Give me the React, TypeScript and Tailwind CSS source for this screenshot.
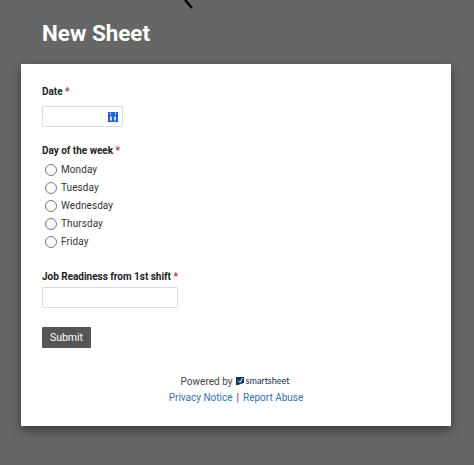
const font = "font-['Roboto',sans-serif]";

function Label({ text }: { text: string }) {
  return (
    <div className="text-[10px] leading-[14px] font-bold text-[#222] tracking-[-0.02px]">
      {text} <span className="text-[#b5273f]">*</span>
    </div>
  );
}

function Radio({ text }: { text: string }) {
  return (
    <div className="flex items-center h-[18px] pl-[3px] gap-[3px]">
      <span className="w-[10px] h-[10px] box-content rounded-full border border-[#777] bg-white shrink-0" />
      <span className="text-[10px] leading-[14px] text-[#333] ml-[1px] tracking-[0.08px]">{text}</span>
    </div>
  );
}

export default function App() {
  return (
    <div className={`${font} relative w-[474px] h-[465px] overflow-hidden bg-[#666666] px-[21px]`}>
      <svg className="absolute left-[183px] top-0" width="12" height="10" viewBox="0 0 12 10">
        <path d="M2 0 L9 8" stroke="#000" strokeWidth="2.5" fill="none" />
      </svg>
      <h1 className="h-[64px] pl-[21px] pt-[18px] text-[22.4px] leading-[30px] font-bold text-white">New Sheet</h1>
      <main className="w-[430px] h-[362px] bg-white shadow-[0_4px_10px_rgba(0,0,0,0.45)] px-[21px] pt-[21px]">
        <Label text="Date" />
        <div className="mt-[7px] w-[81px] h-[21px] border border-[#dcdcdc] rounded-[1px] flex items-center justify-end pr-[4px]">
          <svg width="10" height="10" viewBox="0 0 10 10">
            <rect width="10" height="10" fill="#1f62d8" />
            <rect x="2" y="0.5" width="1" height="2" fill="#cfe0ff" />
            <rect x="7" y="0.5" width="1" height="2" fill="#cfe0ff" />
            <rect x="2" y="4.5" width="2" height="4" fill="#cfe0ff" />
            <rect x="6" y="4.5" width="2" height="4" fill="#cfe0ff" />
          </svg>
        </div>
        <div className="mt-[17px]">
          <Label text="Day of the week" />
        </div>
        <div className="mt-[3px]">
          {["Monday", "Tuesday", "Wednesday", "Thursday", "Friday"].map((d) => (
            <Radio key={d} text={d} />
          ))}
        </div>
        <div className="mt-[19px]">
          <Label text="Job Readiness from 1st shift" />
        </div>
        <div className="mt-[3px] w-[136px] h-[21px] border border-[#dcdcdc] rounded-[1px]" />
        <button className="block mt-[19px] w-[49px] h-[21px] bg-[#555555] rounded-[1px] text-white text-[10.5px] leading-[21px] text-center">
          Submit
        </button>
        <div className="mt-[26px] flex items-center justify-center h-[14px] text-[10px] text-[#444] pr-[2px]">
          <span className="tracking-[0.03px]">Powered by</span>
          <svg className="ml-[3px] mr-[2px]" width="8" height="8" viewBox="0 0 8 8">
            <path d="M0 0 H8 V6 L2 8 H0 Z" fill="#0b3a5c" />
            <path d="M2 3.5 L4 5.5 L6.5 1" stroke="#fff" strokeWidth="1" fill="none" />
          </svg>
          <span className="font-['Lato',sans-serif] font-normal text-[9px] text-[#10304a]">smartsheet</span>
        </div>
        <div className="mt-[3px] flex items-center justify-center text-[10px] leading-[14px] text-[#2f6fc4]">
          <a>Privacy Notice</a>
          <span className="mx-[4px] text-[#333]">|</span>
          <a>Report Abuse</a>
        </div>
      </main>
    </div>
  );
}
